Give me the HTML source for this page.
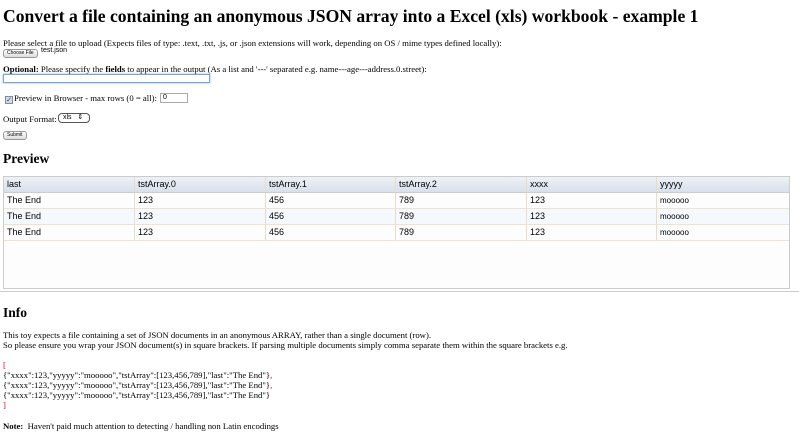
<!DOCTYPE html>
<html><head><meta charset="utf-8"><style>
body{margin:0;width:799px;height:448px;background:#fff;font-family:"Liberation Serif",serif;color:#000;position:relative;overflow:hidden}
.a{position:absolute;white-space:nowrap}
.s{font-size:8.7px}
h1{position:absolute;left:3px;top:6px;margin:0;font-size:17.6px;font-weight:bold;white-space:nowrap}
h2{position:absolute;left:3px;margin:0;font-size:13.5px;font-weight:bold}
.btn{position:absolute;border:1px solid #999;border-radius:3px;background:linear-gradient(#fff,#ddd);font-family:"Liberation Sans",sans-serif;font-size:5px;line-height:7px;padding:0 3px}
.grid{position:absolute;left:3px;top:176px;width:785px;height:111px;border:1px solid #ccc;background:#fdfdfd;font-family:"Liberation Sans",sans-serif;font-size:9px}
.row{position:absolute;left:0;width:785px;height:15px;border-bottom:1px solid #eee2d0}
.row span{position:absolute;border-left:1px solid #e8dcc8;height:15px;top:0;line-height:15px;padding-left:3px;box-sizing:border-box}
.hd{background:linear-gradient(#eef2f7,#d8e0ea);border-bottom:1px solid #ccc}
.red{color:#e00}
</style></head><body>
<h1>Convert a file containing an anonymous JSON array into a Excel (xls) workbook - example 1</h1>
<div class="a s" style="left:3px;top:38px">Please select a file to upload (Expects files of type: .text, .txt, .js, or .json extensions will work, depending on OS / mime types defined locally):</div>
<div class="btn" style="left:3px;top:49px">Choose File</div>
<div class="a" style="left:41px;top:47px;font-family:'Liberation Sans',sans-serif;font-size:7px">test.json</div>
<div class="a s" style="left:3px;top:64px"><b>Optional:</b> Please specify the <b>fields</b> to appear in the output (As a list and '---' separated e.g. name---age---address.0.street):</div>
<div class="a" style="left:3px;top:74px;width:205px;height:7px;border:1px solid #7aa6d6;box-shadow:0 0 2px #8ab"></div>
<div class="a" style="left:5px;top:96px;width:6px;height:6px;border:1px solid #889;background:#cde;font-size:7px;line-height:6px;color:#335;text-align:center">✓</div>
<div class="a s" style="left:14px;top:93px">Preview in Browser - max rows (0 = all):</div>
<div class="a" style="left:160px;top:93px;width:24px;height:8px;border:1px solid #aaa;font-size:7px;font-family:'Liberation Sans',sans-serif;line-height:8px;padding-left:2px">0</div>
<div class="a s" style="left:3px;top:114px">Output Format:</div>
<div class="a" style="left:58px;top:113px;width:26px;height:8px;border:1px solid #555;border-radius:4px;font-size:7px;font-family:'Liberation Sans',sans-serif;line-height:8px;padding-left:4px">xls &nbsp;&nbsp;⇕</div>
<div class="btn" style="left:3px;top:131px">Submit</div>
<h2 style="top:151px">Preview</h2>
<div class="grid">
<div class="row hd" style="top:0"><span style="left:0;width:130px;border:0">last</span><span style="left:130px;width:131px">tstArray.0</span><span style="left:261px;width:130px">tstArray.1</span><span style="left:391px;width:131px">tstArray.2</span><span style="left:522px;width:130px">xxxx</span><span style="left:652px;width:133px">yyyyy</span></div>
<div class="row" style="top:16px"><span style="left:0;width:130px;border:0">The End</span><span style="left:130px">123</span><span style="left:261px">456</span><span style="left:391px">789</span><span style="left:522px">123</span><span style="left:652px;font-size:8px">mooooo</span></div>
<div class="row" style="top:32px;background:#f5f8fc"><span style="left:0;width:130px;border:0">The End</span><span style="left:130px">123</span><span style="left:261px">456</span><span style="left:391px">789</span><span style="left:522px">123</span><span style="left:652px;font-size:8px">mooooo</span></div>
<div class="row" style="top:48px"><span style="left:0;width:130px;border:0">The End</span><span style="left:130px">123</span><span style="left:261px">456</span><span style="left:391px">789</span><span style="left:522px">123</span><span style="left:652px;font-size:8px">mooooo</span></div>
</div>
<div class="a" style="left:0;top:291px;width:799px;height:1px;background:#ccc"></div>
<h2 style="top:305px">Info</h2>
<div class="a s" style="left:3px;top:330px">This toy expects a file containing a set of JSON documents in an anonymous ARRAY, rather than a single document (row).</div>
<div class="a s" style="left:3px;top:340px">So please ensure you wrap your JSON document(s) in square brackets. If parsing multiple documents simply comma separate them within the square brackets e.g.</div>
<div class="a s red" style="left:3px;top:360px">[</div>
<div class="a s" style="left:3px;top:370px">{"xxxx":123,"yyyyy":"mooooo","tstArray":[123,456,789],"last":"The End"}<span class="red">,</span></div>
<div class="a s" style="left:3px;top:380px">{"xxxx":123,"yyyyy":"mooooo","tstArray":[123,456,789],"last":"The End"}<span class="red">,</span></div>
<div class="a s" style="left:3px;top:390px">{"xxxx":123,"yyyyy":"mooooo","tstArray":[123,456,789],"last":"The End"}</div>
<div class="a s red" style="left:3px;top:400px">]</div>
<div class="a s" style="left:3px;top:421px"><b>Note:</b>&nbsp; Haven't paid much attention to detecting / handling non Latin encodings</div>
</body></html>
